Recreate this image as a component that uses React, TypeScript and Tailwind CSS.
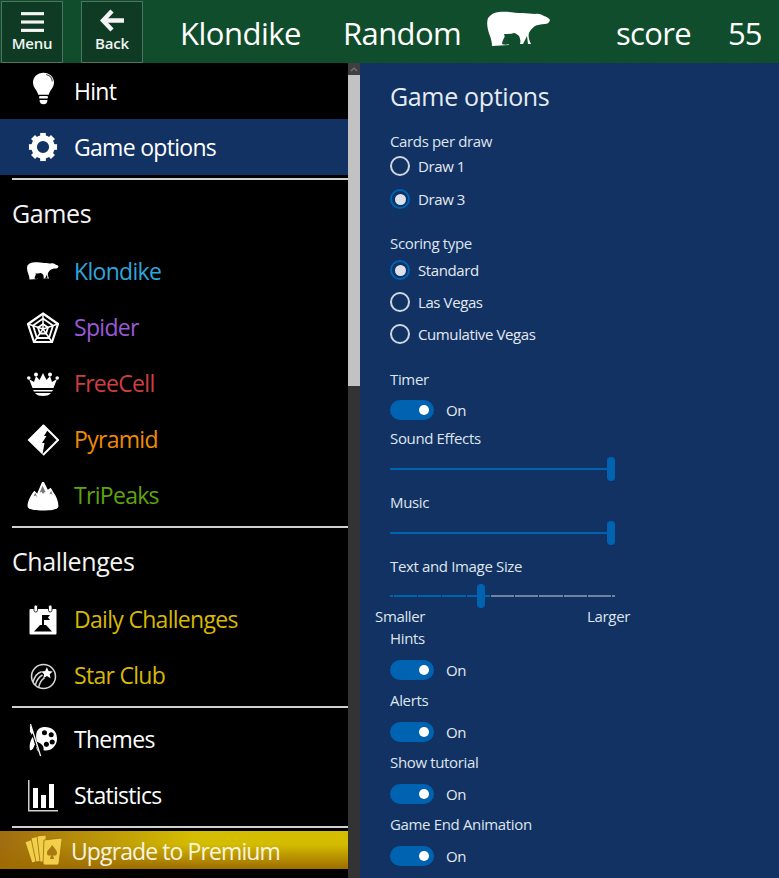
import React from 'react';

const font = { fontFamily: '"Open Sans", "Noto Sans", sans-serif' };

const BearIcon: React.FC<{ className?: string; cut?: string }> = ({ className, cut = '#14502f' }) => (
  <svg viewBox="0 0 64 36" className={className} fill="currentColor">
    <path d="M1 7 C4 3 8 1 12 1 C20 0 28 2 35 2 C40 2 44 3 48 3 C52 2 55 4 57 5 C60 6 62 7 63 9 C62 12 60 13 58 13 C54 13 50 14 48 15 C45 17 43 20 42 22 C41 25 42 29 44 33 L33 33 C34 30 33 27 32 25 C30 23 28 22 27 22 C24 23 20 23 17 23 C18 27 20 31 22 34 L5 35 C5 31 4 28 3 25 C1 20 -1 13 1 7 Z" />
    <path d="M15 33 C15 30 17 27 18 25 C20 27 22 30 22 33 C20 34 17 34 15 33 Z" fill={cut} />
    <path d="M36 33 L40 25 L41 33 Z" fill={cut} />
  </svg>
);

const BulbIcon = () => (
  <svg viewBox="0 0 24 36" className="w-[21px] h-[33px] mb-[6px]" fill="white">
    <path d="M12 0 C5 0 0 5 0 11 C0 17 5 20 6 25 L18 25 C19 20 24 17 24 11 C24 5 19 0 12 0 Z" />
    <path d="M15 2 C19 3 22 6 22 10" fill="none" stroke="#555" strokeWidth="1.2" />
    <rect x="7" y="26.5" width="10" height="3" rx="1" />
    <path d="M7.5 31 H16.5 C16.5 34 15 36 12 36 C9 36 7.5 34 7.5 31 Z" />
  </svg>
);

const GearIcon = () => (
  <svg viewBox="0 0 32 32" className="w-[30px] h-[30px]">
    <circle cx="16" cy="16" r="9.5" fill="none" stroke="white" strokeWidth="6" />
    <g stroke="white" strokeWidth="6">
      <path d="M16 1 V6" />
      <path d="M16 26 V31" />
      <path d="M1 16 H6" />
      <path d="M26 16 H31" />
      <path d="M5.4 5.4 L9 9" />
      <path d="M23 23 L26.6 26.6" />
      <path d="M26.6 5.4 L23 9" />
      <path d="M9 23 L5.4 26.6" />
    </g>
  </svg>
);

const WebIcon = () => (
  <svg viewBox="0 0 32 32" className="w-[32px] h-[32px]" fill="none" stroke="white">
    <path d="M16 1.5 L31 12 L25 30 L7 30 L1 12 Z" strokeWidth="2.2" />
    <path d="M16 6.5 L26 13.5 L22 26 L10 26 L6 13.5 Z" strokeWidth="1.8" />
    <path d="M16 12 L21 15.5 L19 21.5 L13 21.5 L11 15.5 Z" strokeWidth="1.8" />
    <path d="M16 1.5 V17 M31 12 L16 17 M25 30 L16 17 M7 30 L16 17 M1 12 L16 17" strokeWidth="1.5" />
  </svg>
);

const CrownIcon = () => (
  <svg viewBox="0 0 32 24" className="w-[32px] h-[24px]" fill="white">
    <circle cx="1.8" cy="6" r="1.8" />
    <circle cx="9" cy="2.4" r="2" />
    <circle cx="23" cy="2.4" r="2" />
    <circle cx="30.2" cy="6" r="1.8" />
    <path d="M16 1 L19.5 8 L23 4 L25 10 L30 7 L26.5 16 L5.5 16 L2 7 L7 10 L9 4 L12.5 8 Z" />
    <path d="M6 18 H26 L25 19.6 H7 Z" />
    <path d="M8 21 H24 C22 23.4 19 24 16 24 C13 24 10 23.4 8 21 Z" />
  </svg>
);

const PyramidIcon = () => (
  <svg viewBox="0 0 32 32" className="w-[32px] h-[32px]">
    <path d="M16 0.5 L21 5.5 L17 12 L19.5 12 L15 19 L17.5 19 L15.5 30.5 L0.5 16 Z" fill="white" />
    <path d="M16 1 L31 16 L16 31" fill="none" stroke="white" strokeWidth="2" />
  </svg>
);

const PeaksIcon = () => (
  <svg viewBox="0 0 32 30" className="w-[32px] h-[29px]" fill="white">
    <path d="M0 25 C0 20 3 14 7 9 L10 12 L15 0 L17 0 L21 8 L24 6 L27 11 C30 15 32 20 32 25 C32 28 26 29.5 16 29.5 C6 29.5 0 28 0 25 Z" />
    <path d="M15.5 4 L12.5 11 L14.5 10 L16 12.5 L18 10 L19 11 Z M8 11 L6 15 L8 14 L10 15.5 Z M24.5 9 L22.5 13 L24.5 12 L26 14 Z" fill="#777" />
  </svg>
);

const CalendarIcon = () => (
  <svg viewBox="0 0 28 30" className="w-[28px] h-[30px]" fill="white">
    <rect x="0.5" y="4" width="27" height="25.5" rx="1" />
    <rect x="5" y="0" width="3.5" height="7" rx="1.7" stroke="black" strokeWidth="0.8" />
    <rect x="19.5" y="0" width="3.5" height="7" rx="1.7" stroke="black" strokeWidth="0.8" />
    <path d="M13 10 H21 L19 12.5 L21 15 H15 V20 H17 L23 26.5 H5 L11 20 H13 Z" fill="black" />
  </svg>
);

const StarClubIcon = () => (
  <svg viewBox="0 0 28 28" className="w-[27px] h-[27px]" fill="none" stroke="#d8d8d8">
    <circle cx="14" cy="14" r="12.4" strokeWidth="1.6" />
    <path d="M17.5 4.5 L19.3 8.4 L23.5 8.8 L20.4 11.6 L21.3 15.8 L17.5 13.6 L13.8 15.8 L14.6 11.6 L11.5 8.8 L15.7 8.4 Z" fill="white" stroke="none" />
    <path d="M3 20 C5 13 8 10 12 9 M5.5 23 C7 17 10 14 13 12.5 M9 25.5 C10 20 12.5 17 15 15.5" strokeWidth="1.6" />
  </svg>
);

const PaletteIcon = () => (
  <svg viewBox="0 0 30 34" className="w-[29px] h-[33px]" fill="white">
    <path d="M10 5 C16 1 29 3 29 15 C29 24 21 29 15 27 C16 22 12 20 8 18 C7 12 7 8 10 5 Z" />
    <circle cx="16" cy="9" r="2.6" fill="black" />
    <circle cx="23" cy="11" r="2.6" fill="black" />
    <circle cx="24" cy="18.5" r="2.6" fill="black" />
    <circle cx="18" cy="21" r="2.6" fill="black" />
    <path d="M4 13 C1 17 0 22 1 27 C3 28 5 25 6 21 Z" />
    <path d="M8 22 C7 24 8 27 10 29 L7 21 Z" />
    <path d="M1.5 0 L12 33" stroke="white" strokeWidth="1.3" fill="none" />
    <path d="M1 1 L4.5 8 L3 11 L1 8 Z" />
  </svg>
);

const StatsIcon = () => (
  <svg viewBox="0 0 30 32" className="w-[30px] h-[32px]" fill="white">
    <path d="M0 0 H1.5 V30 H30 V31.5 H0 Z" fill="#d0d0d0" />
    <rect x="5" y="8" width="5" height="20" />
    <rect x="13" y="15" width="5" height="13" />
    <rect x="21" y="4" width="5" height="24" />
  </svg>
);

const CardsIcon = () => (
  <svg viewBox="0 0 38 32" className="w-[38px] h-[32px]" fill="#f2cf4a">
    <path d="M1 8 L9 5 L14 27 L8 29 Z" stroke="#9a6d08" strokeWidth="0.8" />
    <path d="M7 4 L15 2 L18 27 L12 28 Z" stroke="#9a6d08" strokeWidth="0.8" />
    <path d="M13 2 L22 1 L23 28 L16 28 Z" stroke="#9a6d08" strokeWidth="0.8" />
    <path d="M20 6 L37 4 Q38 4 38 6 L35 29 Q35 31 33 31 L21 31 Q19 31 19 29 Z" stroke="#9a6d08" strokeWidth="0.8" />
    <path d="M28 11 C31 15 33 16 33 19 C33 22 30 22 29 21 L30 25 H26 L27 21 C25 22 23 22 23 19 C23 16 26 15 28 11 Z" fill="#a87a10" />
  </svg>
);

const HeaderButton: React.FC<{ label: string; children: React.ReactNode; className?: string }> = ({ label, children, className }) => (
  <div className={`w-[62px] h-[62px] bg-[#0f3b24] border border-[#4d7560] flex flex-col items-center pt-[8px] ${className ?? ''}`}>
    <div className="h-[23px] flex items-center">{children}</div>
    <span className="text-[15px] leading-[20px] tracking-[-0.2px] font-semibold text-[#f0f4f1]">{label}</span>
  </div>
);

const NavRow: React.FC<{ icon: React.ReactNode; label: string; color?: string; active?: boolean; textClass?: string }> = ({ icon, label, color = 'text-white', active, textClass = 'pb-[1px]' }) => (
  <div className={`h-14 flex items-center shrink-0 ${active ? 'bg-[#123263]' : ''}`}>
    <div className="w-[74px] pl-[27px] pr-[15px] flex justify-center shrink-0">{icon}</div>
    <span className={`text-[23px] tracking-[-0.7px] ${textClass} ${color}`}>{label}</span>
  </div>
);

const Divider: React.FC<{ className?: string }> = ({ className }) => (
  <div className={`h-[2px] ml-3 bg-[#d0d0d0] shrink-0 ${className ?? ''}`} />
);

const Heading: React.FC<{ label: string }> = ({ label }) => (
  <div className="h-[64px] pl-3 pt-[3px] flex items-center text-[25px] tracking-[-0.4px] text-[#f4f4f4] shrink-0">{label}</div>
);

const Label: React.FC<{ label: string; className?: string }> = ({ label, className }) => (
  <div className={`h-[22px] pb-[2px] flex items-center text-[15px] tracking-[-0.35px] text-[#dfe5ee] shrink-0 ${className ?? ''}`}>{label}</div>
);

const Radio: React.FC<{ label: string; checked?: boolean; className?: string }> = ({ label, checked, className }) => (
  <div className={`flex items-center shrink-0 ${className ?? ''}`}>
    {checked ? (
      <div className="w-5 h-5 rounded-full border-2 border-[#0063b1] flex items-center justify-center">
        <div className="w-[11px] h-[11px] rounded-full bg-[#dde3ec]" />
      </div>
    ) : (
      <div className="w-5 h-5 rounded-full border-2 border-[#cdd5e0]" />
    )}
    <span className="ml-2 text-[15px] tracking-[-0.4px] text-[#e4e9f0]">{label}</span>
  </div>
);

const Toggle: React.FC<{ className?: string }> = ({ className }) => (
  <div className={`h-9 flex items-center shrink-0 ${className ?? ''}`}>
    <div className="w-11 h-5 rounded-full bg-[#0063b1] flex items-center justify-end pr-[5px]">
      <div className="w-[10px] h-[10px] rounded-full bg-white" />
    </div>
    <span className="ml-3 text-[15px] tracking-[-0.35px] text-[#e4e9f0]">On</span>
  </div>
);

const Slider: React.FC = () => (
  <div className="h-9 mt-[1px] w-[225px] flex items-center shrink-0">
    <div className="h-[2px] flex-1 bg-[#0063b1]" />
    <div className="w-2 h-6 rounded-[4px] bg-[#0063b1]" />
  </div>
);

const ticks = [true, true, true, true, true, false, false, false, false, false, false];

const TickSlider: React.FC = () => (
  <div className="relative h-6 w-[225px] mt-[6px] flex items-center gap-[1px] shrink-0">
    {ticks.map((on, i) => (
      <div key={i} className={`h-[2px] ${i === 0 || i === 10 ? 'w-[3px]' : 'flex-1'} ${on ? 'bg-[#0063b1]' : 'bg-[#71829d]'}`} />
    ))}
    <div className="absolute left-[87px] top-0 w-2 h-6 rounded-[4px] bg-[#0063b1]" />
  </div>
);

export default function App() {
  return (
    <div className="w-[779px] h-[878px] overflow-hidden flex flex-col bg-black" style={font}>
      <header className="relative h-[63px] shrink-0 bg-[#124c2b] flex items-center text-white overflow-hidden">
        <svg className="absolute inset-0 w-full h-full opacity-30" aria-hidden="true">
          <filter id="felt">
            <feTurbulence type="fractalNoise" baseFrequency="0.9" numOctaves="2" />
            <feColorMatrix values="0 0 0 0 0  0 0 0 0 0.1  0 0 0 0 0.05  0 0 0 1.4 -0.4" />
          </filter>
          <rect width="100%" height="100%" filter="url(#felt)" />
        </svg>
        <div className="relative flex items-center h-full">
          <HeaderButton label="Menu" className="ml-[1px]">
            <svg viewBox="0 0 22 20" className="w-[23px] h-[21px]" fill="#f4f4f4">
              <rect width="22" height="3" y="1" />
              <rect width="22" height="3" y="9" />
              <rect width="22" height="3" y="17" />
            </svg>
          </HeaderButton>
          <HeaderButton label="Back" className="ml-[18px]">
            <svg viewBox="0 0 24 24" className="w-[24px] h-[24px]" fill="none" stroke="#f4f4f4" strokeWidth="4.5">
              <path d="M12 2 L3 11.5 L12 21" />
              <path d="M4 11.5 H24" />
            </svg>
          </HeaderButton>
          <span className="ml-[37px] w-[163px] pt-[4px] text-[31px] tracking-[-0.5px]">Klondike</span>
          <span className="w-[144px] pt-[4px] text-[31px] tracking-[-0.6px]">Random</span>
          <BearIcon className="w-[64px] h-[36px] text-white mb-[5px]" />
          <span className="ml-[65px] w-[112px] pt-[4px] text-[31px] tracking-[-0.7px]">score</span>
          <span className="pt-[4px] text-[31px] tracking-[-0.9px]">55</span>
        </div>
      </header>

      <div className="flex flex-1 min-h-0">
        <nav className="w-[348px] shrink-0 flex flex-col bg-black">
          <NavRow icon={<BulbIcon />} label="Hint" textClass="pt-[1px]" />
          <NavRow icon={<GearIcon />} label="Game options" textClass="pt-[1px]" active />
          <Divider className="mt-[3px]" />
          <Heading label="Games" />
          <NavRow icon={<BearIcon cut="#000" className="w-[32px] h-[18px] text-white mb-[3px]" />} label="Klondike" color="text-[#2ea5dc]" />
          <NavRow icon={<WebIcon />} label="Spider" color="text-[#9a5ad8]" />
          <NavRow icon={<CrownIcon />} label="FreeCell" color="text-[#cf3f3f]" />
          <NavRow icon={<PyramidIcon />} label="Pyramid" color="text-[#f08a00]" />
          <NavRow icon={<PeaksIcon />} label="TriPeaks" color="text-[#5ea40a]" />
          <Divider className="mt-[2px]" />
          <Heading label="Challenges" />
          <NavRow icon={<CalendarIcon />} label="Daily Challenges" color="text-[#d9b800]" />
          <NavRow icon={<StarClubIcon />} label="Star Club" color="text-[#d9b800]" />
          <Divider className="mt-[2px] mb-[4px]" />
          <NavRow icon={<PaletteIcon />} label="Themes" />
          <NavRow icon={<StatsIcon />} label="Statistics" />
          <Divider className="mt-[2px] mb-[3px]" />
          <div className="h-[38px] flex items-center bg-[linear-gradient(to_bottom,transparent_35%,#9e6c00_100%),linear-gradient(to_right,#a06c10,#d4bc00_55%)] shrink-0">
            <div className="ml-6 w-[47px] shrink-0"><CardsIcon /></div>
            <span className="pt-[2px] text-[23px] tracking-[-0.9px] text-[#f8f4e0]">Upgrade to Premium</span>
          </div>
        </nav>

        <div className="w-3 shrink-0 flex flex-col bg-[#333333]">
          <div className="h-3 bg-[#3f3f3f] flex items-center justify-center">
            <svg viewBox="0 0 8 5" className="w-2 h-[5px]" fill="none" stroke="#777" strokeWidth="1.2"><path d="M1 4 L4 1 L7 4" /></svg>
          </div>
          <div className="h-[311px] bg-[#c2c2c2]" />
        </div>

        <main className="flex-1 bg-[#123263] pl-[30px] pt-[16px] flex flex-col min-w-0">
          <div className="h-9 flex items-center text-[25px] tracking-[-0.35px] text-[#e6ebf2]">Game options</div>
          <Label label="Cards per draw" className="mt-[16px]" />
          <Radio label="Draw 1" className="h-[26px]" />
          <Radio label="Draw 3" checked className="h-10" />
          <Label label="Scoring type" className="mt-[14px]" />
          <Radio label="Standard" checked className="h-[28px] mt-[1px]" />
          <Radio label="Las Vegas" className="h-8 mt-[2px]" />
          <Radio label="Cumulative Vegas" className="h-8" />
          <Label label="Timer" className="mt-[19px]" />
          <Toggle className="mt-[1px]" />
          <Label label="Sound Effects" />
          <Slider />
          <Label label="Music" className="mt-[5px]" />
          <Slider />
          <Label label="Text and Image Size" className="mt-[5px]" />
          <TickSlider />
          <div className="h-4 w-[255px] -ml-[15px] flex justify-between items-center text-[15px] tracking-[-0.35px] text-[#dfe5ee] shrink-0">
            <span>Smaller</span>
            <span>Larger</span>
          </div>
          <Label label="Hints" className="mt-[4px]" />
          <Toggle className="mt-[2px]" />
          <Label label="Alerts" className="mt-[2px]" />
          <Toggle className="mt-[2px]" />
          <Label label="Show tutorial" className="mt-[2px]" />
          <Toggle className="mt-[2px]" />
          <Label label="Game End Animation" className="mt-[2px]" />
          <Toggle className="mt-[2px]" />
        </main>
      </div>
    </div>
  );
}
